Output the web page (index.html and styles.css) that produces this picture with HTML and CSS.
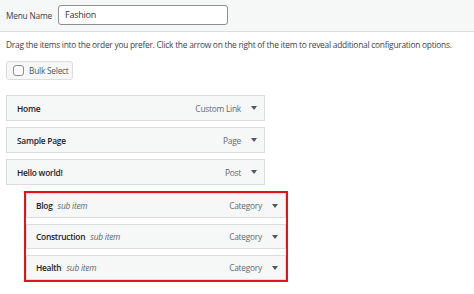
FILE: index.html
```html
<!DOCTYPE html>
<html lang="en">
<head>
  <meta charset="UTF-8">
  <title>Menu structure</title>
  <link rel="stylesheet" href="styles.css">
</head>
<body>
  <div class="menu-head">
    <label class="menu-name-label">Menu Name</label>
    <div class="menu-name-input">Fashion</div>
  </div>

  <p class="drag-hint">Drag the items into the order you prefer. Click the arrow on the right of the item to reveal additional configuration options.</p>

  <div class="bulk-btn">
    <span class="check"></span>
    <span>Bulk Select</span>
  </div>

  <ul class="menu-list">
    <li class="item">
      <span class="title">Home</span>
      <span class="type">Custom Link</span>
      <span class="arrow"></span>
    </li>
    <li class="item">
      <span class="title">Sample Page</span>
      <span class="type">Page</span>
      <span class="arrow"></span>
    </li>
    <li class="item">
      <span class="title">Hello world!</span>
      <span class="type">Post</span>
      <span class="arrow"></span>
    </li>
  </ul>

  <ul class="sub-list">
    <li class="item">
      <span class="title">Blog</span>
      <span class="sub">sub item</span>
      <span class="type">Category</span>
      <span class="arrow"></span>
    </li>
    <li class="item">
      <span class="title">Construction</span>
      <span class="sub">sub item</span>
      <span class="type">Category</span>
      <span class="arrow"></span>
    </li>
    <li class="item">
      <span class="title">Health</span>
      <span class="sub">sub item</span>
      <span class="type">Category</span>
      <span class="arrow"></span>
    </li>
  </ul>
</body>
</html>
```

FILE: styles.css
```css
* {
  margin: 0;
  padding: 0;
  box-sizing: border-box;
}
body {
  background: #fff;
  font-family: "Open Sans", "Noto Sans", sans-serif;
  font-size: 8.4px;
  letter-spacing: -0.25px;
  color: #3c434a;
}
.menu-head {
  display: flex;
  align-items: center;
  height: 32px;
  padding: 0 6px 1px;
  background: #f6f7f7;
  border-bottom: 1px solid #dcdcde;
}
.menu-name-label {
  width: 52px;
  color: #3c434a;
}
.menu-name-input {
  width: 170px;
  height: 20px;
  line-height: 18px;
  padding: 0 6px;
  background: #fff;
  border: 1px solid #8c8f94;
  border-radius: 3px;
  font-size: 9px;
  color: #2c3338;
}
.drag-hint {
  margin: 7px 6px 0;
  line-height: 12px;
  color: #3c434a;
}
.bulk-btn {
  display: flex;
  align-items: center;
  gap: 5px;
  width: 67px;
  height: 19px;
  margin: 10px 0 0 6px;
  padding-left: 6px;
  background: #f6f7f7;
  border: 1px solid #dcdcde;
  border-radius: 3px;
  color: #50575e;
}
.bulk-btn .check {
  width: 11px;
  height: 11px;
  background: #fff;
  border: 1px solid #8c8f94;
  border-radius: 3px;
}
.menu-list,
.sub-list {
  list-style: none;
}
.menu-list {
  margin: 15px 0 0 6px;
  width: 259px;
}
.item {
  display: flex;
  align-items: center;
  height: 26px;
  padding: 0 7px 0 10px;
  margin-bottom: 6px;
  background: #f6f7f7;
  border: 1px solid #dcdcde;
}
.item .title {
  font-weight: 600;
  color: #1d2327;
}
.item .sub {
  margin-left: 5px;
  font-style: italic;
  color: #646970;
}
.item .type {
  margin-left: auto;
  color: #646970;
}
.item .arrow {
  margin-left: 10px;
  width: 0;
  height: 0;
  border-left: 3px solid transparent;
  border-right: 3px solid transparent;
  border-top: 4px solid #50575e;
}
.sub-list {
  width: 264px;
  margin-left: 24px;
  border: 2px solid #e2141b;
}
.sub-list .item {
  width: 260px;
  height: 25px;
  padding-left: 9px;
}
.sub-list .item:last-child {
  margin-bottom: 0;
}
```
